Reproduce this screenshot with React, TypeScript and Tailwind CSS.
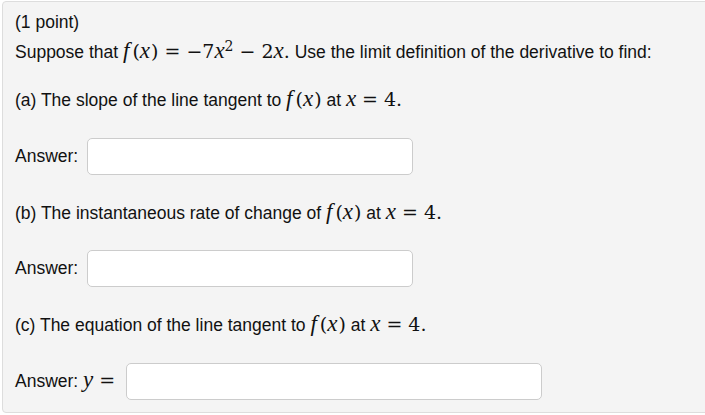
import React from "react";

function M({ children }: { children: React.ReactNode }) {
  return (
    <span className="font-['DejaVu_Serif',serif] text-[19px] leading-none">
      {children}
    </span>
  );
}

// italic math variable
function I({ children }: { children: React.ReactNode }) {
  return (
    <i className="italic font-['Liberation_Serif',serif] text-[23px] leading-none">
      {children}
    </i>
  );
}

// binary operator / relation with MathJax-like spacing
function Op({ children }: { children: React.ReactNode }) {
  return <span className="mx-[6px]">{children}</span>;
}

function Fx() {
  return (
    <M>
      <I>f</I>
      <span className="ml-[3px]">(</span>
      <I>x</I>
      <span className="ml-[1px]">)</span>
    </M>
  );
}

function AtFour() {
  return (
    <M>
      <I>x</I>
      <Op>=</Op>4.
    </M>
  );
}

function AnswerBox({ width }: { width: string }) {
  return (
    <input
      type="text"
      className={`h-[37px] ${width} bg-white border border-[#cccccc] rounded-[5px] outline-none`}
    />
  );
}

export default function App() {
  return (
    <div className="bg-white w-[705px] h-[415px] overflow-hidden pt-px pl-[2px]">
      <div className="w-[740px] h-[412px] bg-[#f4f4f4] border border-[#dddddd] rounded-[4px] pl-[12px] pt-[8px] text-[17.5px] text-[#111] font-['Liberation_Sans',Arial,sans-serif]">
        <p className="h-[24px] leading-[24px]">(1 point)</p>
        <p className="h-[32px] leading-[32px] mt-[2px]">
          Suppose that <Fx />
          <M>
            <Op>=</Op>−7<I>x</I>
            <sup className="text-[14px]">2</sup>
            <Op>−</Op>2<I>x</I>.
          </M>{" "}
          Use the limit definition of the derivative to find:
        </p>

        <p className="h-[32px] leading-[32px] mt-[16px]">
          (a) The slope of the line tangent to <Fx /> at <AtFour />
        </p>
        <div className="flex items-center gap-[9px] mt-[22px]">
          <span>Answer:</span>
          <AnswerBox width="w-[326px]" />
        </div>

        <p className="h-[32px] leading-[32px] mt-[22px]">
          (b) The instantaneous rate of change of <Fx /> at <AtFour />
        </p>
        <div className="flex items-center gap-[9px] mt-[21px]">
          <span>Answer:</span>
          <AnswerBox width="w-[326px]" />
        </div>

        <p className="h-[32px] leading-[32px] mt-[22px]">
          (c) The equation of the line tangent to <Fx /> at <AtFour />
        </p>
        <div className="flex items-center gap-[11px] mt-[22px]">
          <span>
            Answer: <M><I>y</I><span className="ml-[6px]">=</span></M>
          </span>
          <AnswerBox width="w-[416px]" />
        </div>
      </div>
    </div>
  );
}
